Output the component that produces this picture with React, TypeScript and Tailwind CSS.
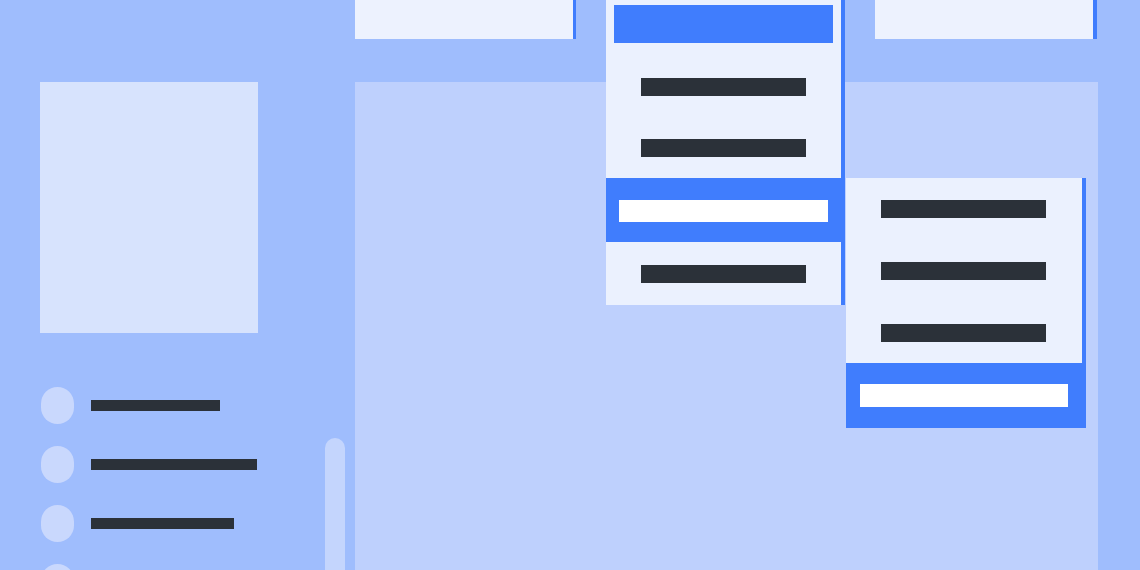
import React from "react";

const BLUE = "bg-[#407dfd]";

function Line({ w }: { w: string }) {
  return <div className={`h-[18px] ${w} bg-[#2b3139]`} />;
}

export default function App() {
  return (
    <div className="relative w-[1140px] h-[570px] overflow-hidden bg-[#9fbdfd] flex" style={{ fontFamily: "Inter, sans-serif" }}>
      {/* Sidebar */}
      <div className="relative w-[355px] h-full shrink-0 pl-[40px] pt-[82px] flex flex-col overflow-hidden">
        <div className="w-[218px] h-[251px] shrink-0 bg-[#d7e3fd]" />
        <div className="mt-[54px] ml-[1px] flex flex-col gap-[22px] shrink-0">
          {[
            "w-[129px]",
            "w-[166px]",
            "w-[143px]",
            "w-[150px]",
          ].map((w, i) => (
            <div key={i} className="flex items-center gap-[17px] shrink-0">
              <div className="w-[33px] h-[37px] shrink-0 rounded-full bg-[#c9d8fd]" />
              <div className={`h-[11px] ${w} bg-[#2b3139]`} />
            </div>
          ))}
        </div>
        <div className="absolute left-[325px] top-[438px] w-[20px] h-[200px] rounded-full bg-[#c4d5fd]" />
      </div>

      {/* Main column */}
      <div className="flex flex-col w-[743px] h-full shrink-0">
        <div className="h-[82px] shrink-0 flex gap-[30px] items-start">
          <div className="w-[221px] h-[39px] bg-[#edf2fe] border-r-[3px] border-[#407dfd]" />
          <div className="w-[239px] h-[39px] bg-[#edf2fe]" />
          <div className="w-[222px] h-[39px] bg-[#edf2fe] border-r-[4px] border-[#407dfd]" />
        </div>
        <div className="flex-1 bg-[#bed0fd]" />
      </div>

      {/* Dropdown 1 */}
      <div className="absolute left-[606px] top-0 w-[239px] h-[305px] bg-[#ebf1fe] border-r-[4px] border-[#407dfd] flex flex-col">
        <div className="h-[56px] pt-[5px] px-[8px]">
          <div className={`h-[38px] ${BLUE}`} />
        </div>
        <div className="h-[62px] flex items-center justify-center"><Line w="w-[165px]" /></div>
        <div className="h-[60px] flex items-center justify-center"><Line w="w-[165px]" /></div>
        <div className={`h-[64px] -mr-[4px] ${BLUE} flex items-center pl-[13px] pt-[1px]`}>
          <div className="w-[209px] h-[22px] bg-white" />
        </div>
        <div className="flex-1 flex items-center justify-center"><Line w="w-[165px]" /></div>
      </div>

      {/* Dropdown 2 (submenu) */}
      <div className="absolute left-[846px] top-[178px] w-[240px] flex flex-col">
        <div className="bg-[#ebf1fe] border-r-[4px] border-[#407dfd] flex flex-col">
          <div className="h-[62px] flex items-center pl-[35px]"><Line w="w-[165px]" /></div>
          <div className="h-[62px] flex items-center pl-[35px]"><Line w="w-[165px]" /></div>
          <div className="h-[61px] flex items-center pl-[35px]"><Line w="w-[165px]" /></div>
        </div>
        <div className={`h-[65px] ${BLUE} flex items-center pl-[14px]`}>
          <div className="w-[208px] h-[23px] bg-white" />
        </div>
      </div>
    </div>
  );
}
